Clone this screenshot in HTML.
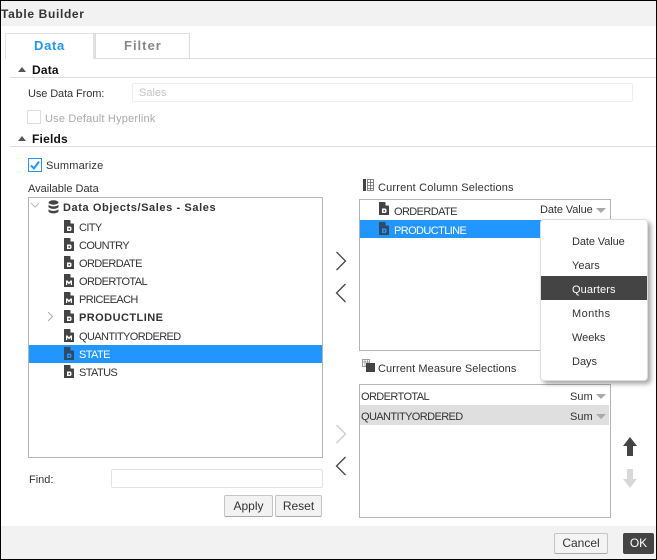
<!DOCTYPE html>
<html><head><meta charset="utf-8"><style>
html,body{margin:0;padding:0;background:#fff}
#r{position:relative;width:657px;height:560px;overflow:hidden;background:#fff;font-family:"Liberation Sans",sans-serif;font-size:11px;color:#333}
#r div,#r svg{position:absolute}
.t{white-space:nowrap;line-height:14px;height:14px}
.u{letter-spacing:-.6px}
.b{font-weight:bold}
.box{box-sizing:border-box;border:1px solid #b4b4b4;background:#fff}
.btn{box-sizing:border-box;border:1px solid #c4c4c4;border-bottom-color:#aaa;background:#f2f2f2;border-radius:2px;text-align:center;font-size:12px;color:#333}
</style></head><body><div id="r">
<svg width="0" height="0" style="position:absolute"><defs>
<g id="fd"><path d="M0 0H6L10 4V13H0Z" fill="#444"/><path d="M6.5 0L10 3.5H6.5Z" fill="#fff"/><path d="M3 6.5H6.5L7.5 7.5V10L6.5 11H3Z" fill="#fff"/><rect x="4.5" y="8" width="1.5" height="1.6" fill="#444"/></g>
<g id="fm"><path d="M0 0H6L10 4V13H0Z" fill="#444"/><path d="M6.5 0L10 3.5H6.5Z" fill="#fff"/><path d="M2 11V6.5H3.5L5 8.3L6.5 6.5H8V11H6.8V8.5L5 10.4L3.2 8.5V11Z" fill="#fff"/></g>
<g id="fb"><path d="M0 0H6L10 4V13H0Z" fill="#2f4a66"/><path d="M6.5 0L10 3.5H6.5Z" fill="#2196ff"/><path d="M3 6.5H6.5L7.5 7.5V10L6.5 11H3Z" fill="#2196ff"/><rect x="4.5" y="8" width="1.5" height="1.6" fill="#2f4a66"/></g>
<path id="dd" d="M0 0H10L5 5Z" fill="#a8a8a8"/>
</defs></svg>

<!-- frame/title/footer -->
<div style="left:0;top:0;width:657px;height:1px;background:#000"></div>
<div style="left:0;top:0;width:1px;height:560px;background:#000"></div>
<div style="left:656px;top:0;width:1px;height:560px;background:#000"></div>
<div style="left:0;top:559px;width:657px;height:1px;background:#000"></div>
<div style="left:1px;top:1px;width:655px;height:25px;background:#f2f2f2"></div>
<div style="left:1px;top:526px;width:655px;height:33px;background:#f2f2f2"></div>
<div class="t b" style="left:1px;top:7px;font-size:12px;color:#333;letter-spacing:.65px">Table Builder</div>

<!-- tabs -->
<div style="left:5px;top:58px;width:651px;height:1px;background:#ddd"></div>
<div style="left:5px;top:33px;width:90px;height:26px;box-sizing:border-box;border:1px solid #e2e2e2;border-bottom:0;border-right:2px solid #e2e2e2;background:#fff"></div>
<div style="left:95px;top:33px;width:95px;height:26px;box-sizing:border-box;border:1px solid #ddd;background:#fff"></div>
<div class="t b" style="left:34px;top:39px;font-size:13px;color:#2196f3;letter-spacing:.7px">Data</div>
<div class="t b" style="left:124px;top:39px;font-size:13px;color:#888;letter-spacing:1px">Filter</div>

<!-- Data section -->
<svg style="left:18px;top:67px" width="8" height="5"><path d="M0 5L4 0L8 5Z" fill="#555"/></svg>
<div class="t b" style="left:32px;top:63px;font-size:12px;color:#111;letter-spacing:.2px">Data</div>
<div style="left:10px;top:77px;width:646px;height:1px;background:#ddd"></div>
<div class="t" style="left:28px;top:87px;letter-spacing:-.1px">Use Data From:</div>
<div style="left:132px;top:83px;width:501px;height:19px;box-sizing:border-box;border:1px solid #eee;border-radius:2px"></div>
<div class="t" style="left:139px;top:86px;color:#c4c4c4">Sales</div>
<div style="left:27px;top:110px;width:14px;height:14px;box-sizing:border-box;border:1px solid #ddd"></div>
<div class="t" style="left:45px;top:112px;color:#aaa;letter-spacing:.2px">Use Default Hyperlink</div>

<!-- Fields section -->
<svg style="left:18px;top:136px" width="8" height="5"><path d="M0 5L4 0L8 5Z" fill="#555"/></svg>
<div class="t b" style="left:32px;top:132px;font-size:12px;color:#111;letter-spacing:.2px">Fields</div>
<div style="left:10px;top:146px;width:646px;height:1px;background:#ddd"></div>
<div style="left:28px;top:158px;width:14px;height:14px;box-sizing:border-box;border:1px solid #2196f3"></div>
<svg style="left:28px;top:158px" width="14" height="14"><path d="M3 7.500L6 10.500L11 3.500" fill="none" stroke="#2196f3" stroke-width="2"/></svg>
<div class="t" style="left:46px;top:159px;letter-spacing:.2px">Summarize</div>
<div class="t" style="left:28px;top:182px">Available Data</div>

<!-- tree -->
<div class="box" style="left:28px;top:197px;width:295px;height:261px"></div>
<svg style="left:30px;top:202px" width="10" height="7"><path d="M1 1L5 5L9 1" fill="none" stroke="#bbb" stroke-width="1"/></svg>
<svg style="left:48px;top:200px" width="11" height="14"><ellipse cx="5.500" cy="2.500" rx="5" ry="2.200" fill="#444"/><path d="M.5 4.500C2 7 9 7 10.500 4.500V7C9 9.500 2 9.500 .5 7Z" fill="#444"/><path d="M.5 9C2 11.500 9 11.500 10.500 9V11.500C9 14 2 14 .5 11.500Z" fill="#444"/></svg>
<div class="t b" style="left:63px;top:201px;color:#333;letter-spacing:.6px">Data Objects/Sales - Sales</div>

<svg style="left:64px;top:220px" width="10" height="13"><use href="#fd"/></svg>
<div class="t u" style="left:79px;top:221px">CITY</div>
<svg style="left:64px;top:238px" width="10" height="13"><use href="#fd"/></svg>
<div class="t u" style="left:79px;top:239px">COUNTRY</div>
<svg style="left:64px;top:256px" width="10" height="13"><use href="#fd"/></svg>
<div class="t u" style="left:79px;top:257px">ORDERDATE</div>
<svg style="left:64px;top:274px" width="10" height="13"><use href="#fm"/></svg>
<div class="t u" style="left:79px;top:275px">ORDERTOTAL</div>
<svg style="left:64px;top:292px" width="10" height="13"><use href="#fm"/></svg>
<div class="t u" style="left:79px;top:293px">PRICEEACH</div>
<svg style="left:47px;top:311px" width="7" height="11"><path d="M1 1L5.500 5.500L1 10" fill="none" stroke="#aaa"/></svg>
<svg style="left:64px;top:310px" width="10" height="13"><use href="#fd"/></svg>
<div class="t b" style="left:79px;top:311px;letter-spacing:.45px">PRODUCTLINE</div>
<svg style="left:64px;top:329px" width="10" height="13"><use href="#fm"/></svg>
<div class="t u" style="left:79px;top:330px">QUANTITYORDERED</div>
<div style="left:29px;top:345px;width:293px;height:18px;background:#2196ff"></div>
<svg style="left:64px;top:347px" width="10" height="13"><use href="#fb"/></svg>
<div class="t u" style="left:79px;top:348px;color:#fff">STATE</div>
<svg style="left:64px;top:365px" width="10" height="13"><use href="#fd"/></svg>
<div class="t u" style="left:79px;top:366px">STATUS</div>

<!-- find + buttons -->
<div class="t" style="left:29px;top:473px">Find:</div>
<div style="left:111px;top:469px;width:212px;height:19px;box-sizing:border-box;border:1px solid #e2e2e2;border-radius:2px"></div>
<div class="btn" style="left:224px;top:495px;width:49px;height:22px;line-height:20px">Apply</div>
<div class="btn" style="left:275px;top:495px;width:47px;height:22px;line-height:20px">Reset</div>

<!-- arrows -->
<svg style="left:335px;top:251px" width="12" height="20"><path d="M1.500 1L10.500 10L1.500 19" fill="none" stroke="#444" stroke-width="1.300"/></svg>
<svg style="left:335px;top:283px" width="12" height="20"><path d="M10.500 1L1.500 10L10.500 19" fill="none" stroke="#444" stroke-width="1.300"/></svg>
<svg style="left:335px;top:424px" width="12" height="20"><path d="M1.500 1L10.500 10L1.500 19" fill="none" stroke="#ccc" stroke-width="1.300"/></svg>
<svg style="left:335px;top:456px" width="12" height="20"><path d="M10.500 1L1.500 10L10.500 19" fill="none" stroke="#444" stroke-width="1.300"/></svg>

<!-- column selections -->
<svg style="left:363px;top:179px" width="11" height="12"><rect x="0" y="0" width="3" height="12" fill="#444"/><path d="M4.500 .5H10.500V11.500H4.500ZM4.500 3.500H10.500M4.500 6.500H10.500M4.500 9.500H10.500M7.500 .5V11.500" fill="none" stroke="#666" stroke-width=".8"/></svg>
<div class="t" style="left:378px;top:181px;letter-spacing:.17px">Current Column Selections</div>
<div class="box" style="left:359px;top:199px;width:252px;height:152px"></div>
<svg style="left:379px;top:202px" width="10" height="13"><use href="#fd"/></svg>
<div class="t u" style="left:394px;top:205px">ORDERDATE</div>
<div class="t" style="left:540px;top:203px;letter-spacing:-.1px">Date Value</div>
<svg style="left:596px;top:208px" width="10" height="5"><use href="#dd"/></svg>
<div style="left:360px;top:220px;width:250px;height:18px;background:#2196ff"></div>
<svg style="left:379px;top:222px" width="10" height="13"><use href="#fb"/></svg>
<div class="t u" style="left:394px;top:224px;color:#fff">PRODUCTLINE</div>

<!-- measure selections -->
<svg style="left:362px;top:359px" width="14" height="14"><rect x=".5" y=".5" width="7" height="7" fill="#fff" stroke="#888" stroke-width=".8"/><path d="M.5 3H7.500M3 .5V7.500M5.500 .5V7.500" stroke="#888" stroke-width=".7"/><rect x="4" y="4" width="9" height="9" fill="#444"/></svg>
<div class="t" style="left:378px;top:362px;letter-spacing:.08px">Current Measure Selections</div>
<div class="box" style="left:359px;top:384px;width:252px;height:134px"></div>
<div class="t u" style="left:361px;top:390px">ORDERTOTAL</div>
<div class="t" style="left:570px;top:390px">Sum</div>
<svg style="left:596px;top:394px" width="10" height="5"><use href="#dd"/></svg>
<div style="left:360px;top:405px;width:249px;height:20px;background:#dfdfdf"></div>
<div class="t u" style="left:361px;top:410px">QUANTITYORDERED</div>
<div class="t" style="left:570px;top:410px">Sum</div>
<svg style="left:596px;top:414px" width="10" height="5"><use href="#dd"/></svg>

<!-- dropdown -->
<div style="left:540px;top:219px;width:108px;height:162px;box-sizing:border-box;background:#fff;border:1px solid #ddd;border-radius:4px;box-shadow:3px 3px 5px rgba(0,0,0,.35)"></div>
<div style="left:541px;top:276px;width:106px;height:24px;background:#444"></div>
<div class="t" style="left:572px;top:235px;letter-spacing:-.1px">Date Value</div>
<div class="t" style="left:572px;top:259px">Years</div>
<div class="t" style="left:572px;top:283px;color:#fff;letter-spacing:.1px">Quarters</div>
<div class="t" style="left:572px;top:307px;letter-spacing:.4px">Months</div>
<div class="t" style="left:572px;top:331px">Weeks</div>
<div class="t" style="left:572px;top:355px">Days</div>

<!-- up/down -->
<svg style="left:622px;top:437px" width="16" height="19"><path d="M8 0L15 9H11V19H5V9H1Z" fill="#444"/></svg>
<svg style="left:622px;top:469px" width="16" height="19"><path d="M5 0H11V10H15L8 19L1 10H5Z" fill="#d8d8d8"/></svg>

<!-- footer buttons -->
<div class="btn" style="left:554px;top:533px;width:54px;height:21px;line-height:19px;background:#f4f4f4">Cancel</div>
<div class="btn" style="left:623px;top:533px;width:31px;height:21px;line-height:19px;background:#444;border-color:#444;color:#fff">OK</div>
</div></body></html>
